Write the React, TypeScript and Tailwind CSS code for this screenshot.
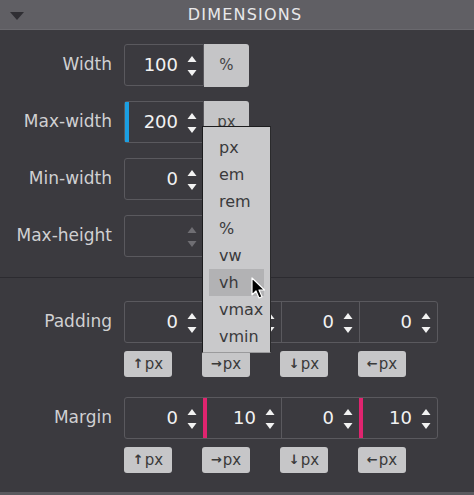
import React from "react";

const font = { fontFamily: '"DejaVu Sans", "Liberation Sans", sans-serif' };

function Spin({ dim = false }: { dim?: boolean }) {
  const c = dim ? "#6f6e73" : "#f2f2f2";
  return (
    <svg width="10" height="20" viewBox="0 0 10 20" className="shrink-0">
      <polygon points="0.5,6 5,0 9.5,6" fill={c} />
      <polygon points="0.5,14 9.5,14 5,20" fill={c} />
    </svg>
  );
}

function Cell({
  value,
  bar,
  dim,
  first,
}: {
  value: string;
  bar?: string;
  dim?: boolean;
  first?: boolean;
}) {
  return (
    <div
      className={`relative flex h-full w-[78px] items-center justify-end pr-[6px] ${
        first ? "" : "border-l border-[#5a595e]"
      }`}
    >
      {bar === "blue" && <div className="absolute left-0 top-0 h-full w-[4px] bg-[#1b9fe2]" />}
      {bar === "pink" && <div className="absolute left-[-1px] top-0 h-full w-[4px] bg-[#e0246f]" />}
      <span className="mr-[9px] text-[18px] leading-none text-[#f2f2f2]">{value}</span>
      <div className="mt-[2px]">
        <Spin dim={dim} />
      </div>
    </div>
  );
}

function Label({ children }: { children: React.ReactNode }) {
  return (
    <div className="w-[112px] shrink-0 text-right text-[17px] text-[#d0d0d2]">{children}</div>
  );
}

function SingleRow({
  label,
  value,
  unit,
  bar,
  dim,
}: {
  label: string;
  value: string;
  unit?: string;
  bar?: string;
  dim?: boolean;
}) {
  return (
    <div className="flex h-[42px] items-center">
      <Label>{label}</Label>
      <div className="ml-[12px] flex h-full">
        <div className="flex h-full rounded-l-[3px] border border-[#5a595e]">
          <Cell value={value} bar={bar} dim={dim} first />
        </div>
        {unit !== undefined && (
          <div className="flex h-[43px] w-[45px] items-center justify-center rounded-r-[3px] bg-[#c5c5c7] text-[15px] text-[#444]">
            {unit}
          </div>
        )}
      </div>
    </div>
  );
}

function UnitBtn({ arrow }: { arrow: string }) {
  return (
    <div className="flex h-[26px] w-[48px] items-center justify-center rounded-[3px] bg-[#c6c6c8] text-[15px] text-[#3a3a3a]">
      <span className="mr-[1px] text-[13px] font-bold">{arrow}</span>
      <span>px</span>
    </div>
  );
}

function QuadRow({ label, values, pink }: { label: string; values: string[]; pink?: boolean }) {
  const arrows = ["↑", "→", "↓", "←"];
  return (
    <div className="flex flex-col">
      <div className="flex h-[42px] items-center">
        <Label>{label}</Label>
        <div className="ml-[12px] flex h-full rounded-[3px] border border-[#5a595e]">
          {values.map((v, i) => (
            <Cell key={i} value={v} first={i === 0} bar={pink && (i === 1 || i === 3) ? "pink" : undefined} />
          ))}
        </div>
      </div>
      <div className="ml-[124px] mt-[8px] flex gap-[30px]">
        {arrows.map((a) => (
          <UnitBtn key={a} arrow={a} />
        ))}
      </div>
    </div>
  );
}

export default function App() {
  const items = ["px", "em", "rem", "%", "vw", "vh", "vmax", "vmin"];
  return (
    <div className="relative h-[495px] w-[474px] overflow-hidden bg-[#3b3a3f]" style={font}>
      <div className="relative flex h-[30px] items-center justify-center border-b border-[#6a696e] bg-[#605f64]">
        <svg className="absolute left-[10px] top-[12px]" width="14" height="8" viewBox="0 0 14 8">
          <polygon points="0,0 14,0 7,8" fill="#2f2e33" />
        </svg>
        <span className="ml-[16px] text-[16px] tracking-[1.2px] text-[#e8e8ea]">DIMENSIONS</span>
      </div>

      <div className="flex flex-col gap-[15px] pt-[14px]">
        <SingleRow label="Width" value="100" unit="%" />
        <SingleRow label="Max-width" value="200" unit="px" bar="blue" />
        <SingleRow label="Min-width" value="0" />
        <SingleRow label="Max-height" value="" dim />
      </div>

      <div className="mt-[20px] border-t border-[#2c2b30]" />

      <div className="flex flex-col gap-[20px] pt-[23px]">
        <QuadRow label="Padding" values={["0", "0", "0", "0"]} />
        <QuadRow label="Margin" values={["0", "10", "0", "10"]} pink />
      </div>

      <div className="absolute bottom-0 left-0 h-[3px] w-full bg-[#5a595e]" />

      {/* dropdown menu */}
      <div className="absolute left-[202px] top-[126px] h-[227px] w-[69px] border border-t-[#1c1c1e] border-l-[#1c1c1e] border-r-[#2a2a2c] border-b-[#9a9a9c] bg-[#c9c9cb] pt-[7px]">
        {items.map((it) => (
          <div
            key={it}
            className={`mx-[6px] flex h-[27px] items-center pl-[10px] text-[16px] text-[#3a3a3c] ${
              it === "vh" ? "bg-[#b2b2b4]" : ""
            }`}
          >
            {it}
          </div>
        ))}
      </div>

      {/* cursor */}
      <svg className="absolute left-[251px] top-[277px]" width="16" height="24" viewBox="0 0 16 24">
        <path
          d="M1 1 L1 18 L5 14 L8 21 L11 19.8 L8 13 L13.5 13 Z"
          fill="#000"
          stroke="#fff"
          strokeWidth="1.2"
          strokeLinejoin="round"
        />
      </svg>
    </div>
  );
}
